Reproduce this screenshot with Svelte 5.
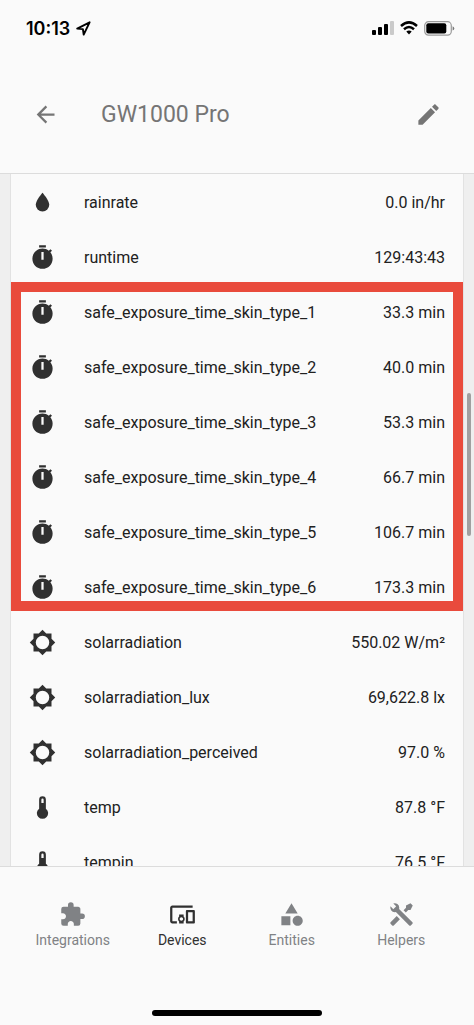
<script>
    const icons = {
        back: "M20,11V13H8L13.5,18.5L12.08,19.92L4.16,12L12.08,4.08L13.5,5.5L8,11H20Z",
        pencil: "M20.71,7.04C21.1,6.65 21.1,6 20.71,5.63L18.37,3.29C18,2.9 17.35,2.9 16.96,3.29L15.12,5.12L18.87,8.87M3,17.25V21H6.75L17.81,9.93L14.06,6.18L3,17.25Z",
        water: "M12,20A6,6 0 0,1 6,14C6,10 12,3.25 12,3.25C12,3.25 18,10 18,14A6,6 0 0,1 12,20Z",
        timer: "M19.03 7.39L20.45 5.97C20 5.46 19.55 5 19.04 4.56L17.62 6C16.07 4.74 14.12 4 12 4C7.03 4 3 8.03 3 13S7.03 22 12 22C17 22 21 17.97 21 13C21 10.88 20.26 8.93 19.03 7.39M13 14H11V7H13V14M15 1H9V3H15V1Z",
        sun: "M12,18A6,6 0 0,1 6,12A6,6 0 0,1 12,6A6,6 0 0,1 18,12A6,6 0 0,1 12,18M20,15.31L23.31,12L20,8.69V4H15.31L12,0.69L8.69,4H4V8.69L0.69,12L4,15.31V20H8.69L12,23.31L15.31,20H20V15.31Z",
        thermometer: "M15 13V5A3 3 0 0 0 9 5V13A5 5 0 1 0 15 13M12 4A1 1 0 0 1 13 5V8H11V5A1 1 0 0 1 12 4Z",
        puzzle: "M20.5,11H19V7C19,5.89 18.1,5 17,5H13V3.5A2.5,2.5 0 0,0 10.5,1A2.5,2.5 0 0,0 8,3.5V5H4A2,2 0 0,0 2,7V10.8H3.5C5,10.8 6.2,12 6.2,13.5C6.2,15 5,16.2 3.5,16.2H2V20A2,2 0 0,0 4,22H7.8V20.5C7.8,19 9,17.8 10.5,17.8C12,17.8 13.2,19 13.2,20.5V22H17A2,2 0 0,0 19,20V16H20.5A2.5,2.5 0 0,0 23,13.5A2.5,2.5 0 0,0 20.5,11Z",
        devices: "M3 6H21V4H3C1.9 4 1 4.9 1 6V18C1 19.1 1.9 20 3 20H7V18H3V6M13 12H9V13.78C8.39 14.33 8 15.11 8 16C8 16.89 8.39 17.67 9 18.22V20H13V18.22C13.61 17.67 14 16.88 14 16S13.61 14.33 13 13.78V12M11 17.5C10.17 17.5 9.5 16.83 9.5 16S10.17 14.5 11 14.5 12.5 15.17 12.5 16 11.83 17.5 11 17.5M22 8H16C15.5 8 15 8.5 15 9V19C15 19.5 15.5 20 16 20H22C22.5 20 23 19.5 23 19V9C23 8.5 22.5 8 22 8M21 18H17V10H21V18Z",
        shape: "M11,13.5V21.5H3V13.5H11M12,2L17.5,11H6.5L12,2M17.5,13C20,13 22,15 22,17.5C22,20 20,22 17.5,22C15,22 13,20 13,17.5C13,15 15,13 17.5,13Z",
        tools: "M21.71 20.29L20.29 21.71A1 1 0 0 1 18.88 21.71L7 9.85A3.81 3.81 0 0 1 6 10A4 4 0 0 1 2.22 4.7L4.76 7.24L5.29 6.71L6.71 5.29L7.24 4.76L4.7 2.22A4 4 0 0 1 10 6A3.81 3.81 0 0 1 9.85 7L21.71 18.88A1 1 0 0 1 21.71 20.29M2.29 18.88A1 1 0 0 0 2.29 20.29L3.71 21.71A1 1 0 0 0 5.12 21.71L10.59 16.25L7.76 13.42M20 2L16 4V6L13.83 8.17L15.83 10.17L18 8H20L22 4Z",
    };

    const groups = [
        {
            marked: false,
            rows: [
                { icon: "water", name: "rainrate", value: "0.0 in/hr" },
                { icon: "timer", name: "runtime", value: "129:43:43" },
            ],
        },
        {
            marked: true,
            rows: [
                { icon: "timer", name: "safe_exposure_time_skin_type_1", value: "33.3 min" },
                { icon: "timer", name: "safe_exposure_time_skin_type_2", value: "40.0 min" },
                { icon: "timer", name: "safe_exposure_time_skin_type_3", value: "53.3 min" },
                { icon: "timer", name: "safe_exposure_time_skin_type_4", value: "66.7 min" },
                { icon: "timer", name: "safe_exposure_time_skin_type_5", value: "106.7 min" },
                { icon: "timer", name: "safe_exposure_time_skin_type_6", value: "173.3 min" },
            ],
        },
        {
            marked: false,
            rows: [
                { icon: "sun", name: "solarradiation", value: "550.02 W/m²" },
                { icon: "sun", name: "solarradiation_lux", value: "69,622.8 lx" },
                { icon: "sun", name: "solarradiation_perceived", value: "97.0 %" },
                { icon: "thermometer", name: "temp", value: "87.8 °F" },
                { icon: "thermometer", name: "tempin", value: "76.5 °F" },
            ],
        },
    ];

    const tabs = [
        { icon: "puzzle", label: "Integrations" },
        { icon: "devices", label: "Devices" },
        { icon: "shape", label: "Entities" },
        { icon: "tools", label: "Helpers" },
    ];

    let current = $state("Devices");
</script>

{#snippet icon(name)}
    <svg class="icon" viewBox="0 0 24 24" aria-hidden="true"><path d={icons[name]} /></svg>
{/snippet}

<div class="page">
    <header>
        <div class="status">
            <span class="time">10:13</span>
            <svg class="location" width="15" height="15" viewBox="0 0 15 15" aria-hidden="true">
                <path d="M1.2 7.6L13.6 1.3L7.7 13.6L6.9 8.1Z" fill="none" stroke="#000" stroke-width="1.9" stroke-linejoin="round" />
            </svg>
            <div class="signals">
                <svg width="22" height="14" viewBox="0 0 22 14" aria-hidden="true">
                    <rect x="0" y="9" width="4" height="5" rx="1" />
                    <rect x="6" y="6" width="4" height="8" rx="1" />
                    <rect x="12" y="3" width="4" height="11" rx="1" />
                    <rect x="18" y="0" width="4" height="14" rx="1" fill="#cacaca" />
                </svg>
                <svg width="18" height="14" viewBox="0 0 18 14" fill="none" stroke="#000" stroke-width="2.5" aria-hidden="true">
                    <path d="M1 5Q9 -2.2 17 5" />
                    <path d="M4 8.3Q9 3.8 14 8.3" />
                    <path d="M6.3 10.5Q9 8.7 11.7 10.5L9 13.4Z" fill="#000" stroke="none" />
                </svg>
                <svg width="31" height="15" viewBox="0 0 31 15" aria-hidden="true">
                    <rect x="0.7" y="0.7" width="26.6" height="13.4" rx="3.8" fill="none" stroke="#9a9a9a" stroke-width="1.2" />
                    <rect x="2.3" y="2.3" width="20" height="10.2" rx="2" />
                    <path d="M28.6 5.2Q30.3 6 30.3 7.4T28.6 9.6Z" fill="#777" />
                </svg>
            </div>
        </div>
        <div class="toolbar">
            <button aria-label="Back">{@render icon("back")}</button>
            <h1>GW1000 Pro</h1>
            <button aria-label="Edit">{@render icon("pencil")}</button>
        </div>
    </header>

    <main>
        <div class="card">
            {#each groups as group}
                <ul class:marked={group.marked}>
                    {#each group.rows as row}
                        <li>
                            {@render icon(row.icon)}
                            <span class="name">{row.name}</span>
                            <span class="value">{row.value}</span>
                        </li>
                    {/each}
                </ul>
            {/each}
        </div>
        <div class="thumb"></div>
    </main>

    <footer>
        <nav>
            {#each tabs as tab}
                <button class:active={current === tab.label} onclick={() => (current = tab.label)}>
                    {@render icon(tab.icon)}
                    <span>{tab.label}</span>
                </button>
            {/each}
        </nav>
        <div class="home"></div>
    </footer>
</div>

<style>
    :global(body) {
        margin: 0;
        background: #fafafa;
    }

    .page {
        display: flex;
        flex-direction: column;
        height: 100vh;
        background: #fafafa;
        color: #212121;
        font-family: Roboto, sans-serif;
        font-size: 16px;
    }

    button {
        display: flex;
        padding: 0;
        border: 0;
        background: none;
        color: inherit;
        font: inherit;
        cursor: pointer;
    }

    .icon {
        flex: none;
        width: 27px;
        height: 27px;
        fill: currentColor;
    }

    header {
        border-bottom: 1px solid #dcdcdc;
    }

    .status {
        display: flex;
        align-items: center;
        height: 56px;
        padding: 0 19px 0 26px;
    }

    .time {
        margin-right: 6px;
        color: #000;
        font-family: Inter, sans-serif;
        font-size: 18px;
        font-weight: 600;
    }

    .signals {
        display: flex;
        align-items: center;
        gap: 6px;
        margin-left: auto;
    }

    .toolbar {
        display: flex;
        align-items: center;
        height: 117px;
        padding: 0 32px;
        color: #757575;
    }

    h1 {
        flex: 1;
        margin: 0 0 0 42px;
        font-size: 23px;
        font-weight: 400;
    }

    main {
        position: relative;
        flex: 1;
        min-height: 0;
        overflow: hidden;
        padding: 0 10px;
        background: #efefef;
    }

    .card {
        padding-top: 1px;
        background: #fafafa;
        border: solid #e2e2e2;
        border-width: 0 1px;
    }

    ul {
        position: relative;
        margin: 0;
        padding: 0;
        list-style: none;
    }

    /* red frame drawn over the highlighted rows */
    .marked::after {
        content: "";
        position: absolute;
        inset: -3px 0 4px;
        border: 10px solid #e94b3c;
        pointer-events: none;
    }

    li {
        display: flex;
        align-items: center;
        height: 55px;
        padding: 0 18px;
    }

    li .icon {
        color: #303030;
    }

    .name {
        flex: 1;
        margin-left: 28px;
    }

    .thumb {
        position: absolute;
        top: 219px;
        right: 3px;
        width: 4px;
        height: 143px;
        border-radius: 2px;
        background: #a0a0a0;
    }

    footer {
        display: flex;
        flex-direction: column;
        border-top: 1px solid #dcdcdc;
    }

    nav {
        display: flex;
        padding: 34px 18px 0;
    }

    nav button {
        flex: 1;
        flex-direction: column;
        align-items: center;
        gap: 3px;
        color: #808285;
        font-size: 14px;
        line-height: 18px;
    }

    nav .active {
        color: #303030;
    }

    .home {
        width: 36%;
        height: 6px;
        margin: 61px auto 9px;
        border-radius: 3px;
        background: #000;
    }
</style>
